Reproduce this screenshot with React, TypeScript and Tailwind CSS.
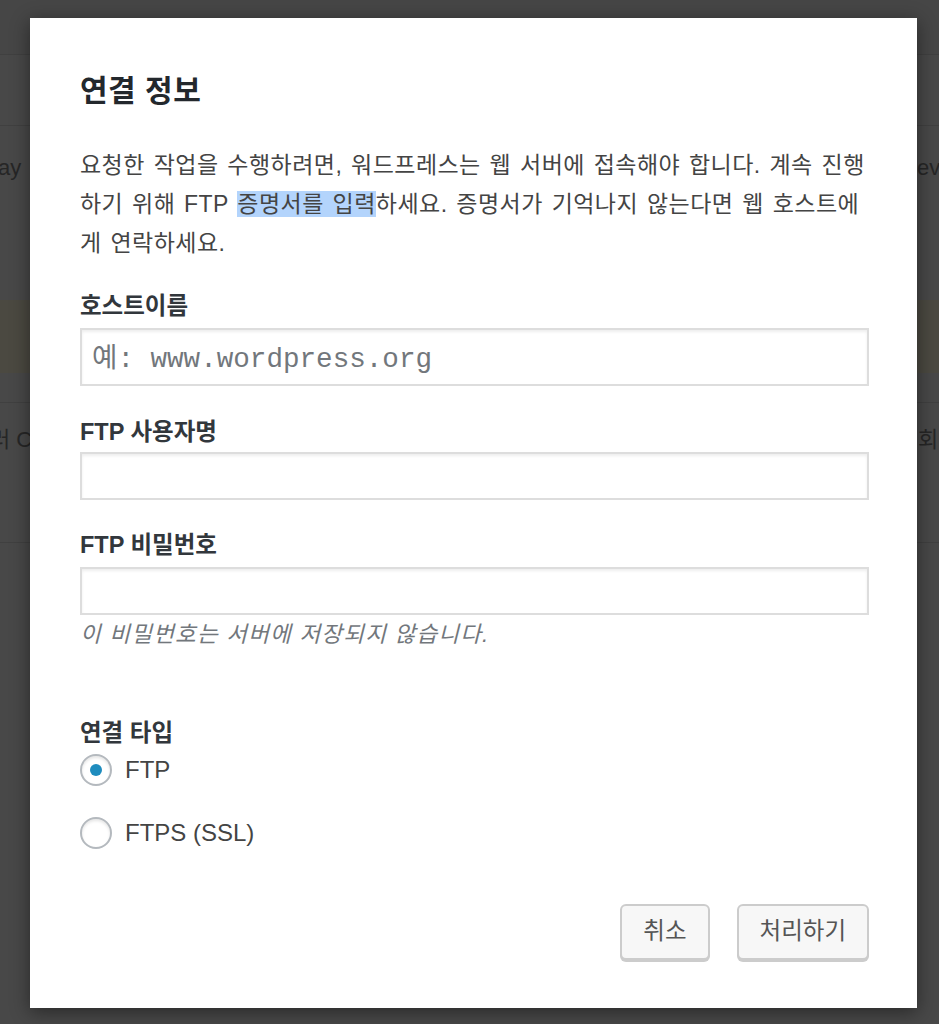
import React from "react";

const sans = { fontFamily: '"Liberation Sans", "Noto Sans CJK KR", sans-serif' };

function Radio({ checked, label }: { checked?: boolean; label: string }) {
  return (
    <label className="flex items-center h-[32px]">
      <span className="w-[32px] h-[32px] rounded-full border-2 border-[#b4b9be] bg-white shadow-[inset_0_2px_3px_rgba(0,0,0,0.1)] flex items-center justify-center">
        {checked && <span className="w-[12px] h-[12px] rounded-full bg-[#1e8cbe]" />}
      </span>
      <span className="ml-[13px] text-[24px] leading-[32px] text-[#444]">{label}</span>
    </label>
  );
}

export default function App() {
  return (
    <div className="relative w-[939px] h-[1024px] overflow-hidden bg-[#484848]" style={sans}>
      {/* dimmed admin page underneath */}
      <div className="flex flex-col">
        <div className="h-[55px] border-b border-[#404040] bg-[#464646]" />
        <div className="h-[71px] border-b border-[#404040]" />
        <div className="h-[174px] flex justify-between items-start pt-[26px] text-[22px] leading-[32px] text-[#262626]">
          <span className="ml-[-2px]">ay</span>
          <span className="w-[22px] overflow-hidden whitespace-nowrap">ev</span>
        </div>
        <div className="h-[73px] bg-[#4b4941]" />
        <div className="h-[30px] border-b border-[#404040]" />
        <div className="h-[140px] flex justify-between items-start pt-[21px] text-[22px] leading-[32px] text-[#262626] border-b border-[#404040]">
          <span className="ml-[-10px] whitespace-nowrap">러 C</span>
          <span className="w-[21px] overflow-hidden whitespace-nowrap">회</span>
        </div>
      </div>

      {/* modal dialog */}
      <div className="absolute left-[30px] top-[18px] w-[887px] h-[990px] bg-white shadow-[0_4px_18px_rgba(0,0,0,0.45)] pl-[50px] pr-[48px] pt-[54px] flex flex-col">
        <h1 className="text-[30px] leading-[38px] font-bold text-[#23282d] tracking-[0.5px]">연결 정보</h1>
        <p className="mt-[36px] text-[23px] leading-[39px] text-[#444] whitespace-nowrap tracking-[0.45px] [word-spacing:2px]">
          요청한 작업을 수행하려면, 워드프레스는 웹 서버에 접속해야 합니다. 계속 진행
          <br />
          하기 위해 FTP <span className="bg-[#b3d4fc]">증명서를 입력</span>하세요. 증명서가 기억나지 않는다면 웹 호스트에
          <br />
          게 연락하세요.
        </p>

        <div className="mt-[28px] text-[23.5px] leading-[30px] font-bold text-[#32373c]">호스트이름</div>
        <input
          className="mt-[7px] h-[58px] w-full border-2 border-[#dddddd] shadow-[inset_0_2px_3px_rgba(0,0,0,0.07)] pl-[10px] pt-[4px] text-[27.6px] outline-none placeholder:text-[#72777c]"
          style={{ fontFamily: '"Liberation Mono", "Noto Sans CJK KR", monospace' }}
          placeholder="예: www.wordpress.org"
        />

        <div className="mt-[31px] text-[23.5px] leading-[30px] font-bold text-[#32373c]">FTP 사용자명</div>
        <input className="mt-[5px] h-[48px] w-full border-2 border-[#dddddd] shadow-[inset_0_2px_3px_rgba(0,0,0,0.07)] outline-none" />

        <div className="mt-[30px] text-[23.5px] leading-[30px] font-bold text-[#32373c]">FTP 비밀번호</div>
        <input type="password" className="mt-[7px] h-[48px] w-full border-2 border-[#dddddd] shadow-[inset_0_2px_3px_rgba(0,0,0,0.07)] outline-none" />
        <div className="mt-[6px] text-[22.5px] leading-[28px] italic text-[#72777c] tracking-[1.2px]">이 비밀번호는 서버에 저장되지 않습니다.</div>

        <div className="mt-[69px] text-[23.5px] leading-[30px] font-bold text-[#32373c]">연결 타입</div>
        <div className="mt-[6px] flex flex-col gap-[31px]">
          <Radio checked label="FTP" />
          <Radio label="FTPS (SSL)" />
        </div>

        <div className="mt-[55px] flex justify-end gap-[27px]">
          <button className="h-[56px] px-[21px] border-2 border-[#cccccc] bg-[#f7f7f7] rounded-[6px] shadow-[0_2px_0_#cccccc] text-[23.5px] text-[#555]">
            취소
          </button>
          <button className="h-[56px] px-[21px] border-2 border-[#cccccc] bg-[#f7f7f7] rounded-[6px] shadow-[0_2px_0_#cccccc] text-[23.5px] text-[#555]">
            처리하기
          </button>
        </div>
      </div>
    </div>
  );
}
